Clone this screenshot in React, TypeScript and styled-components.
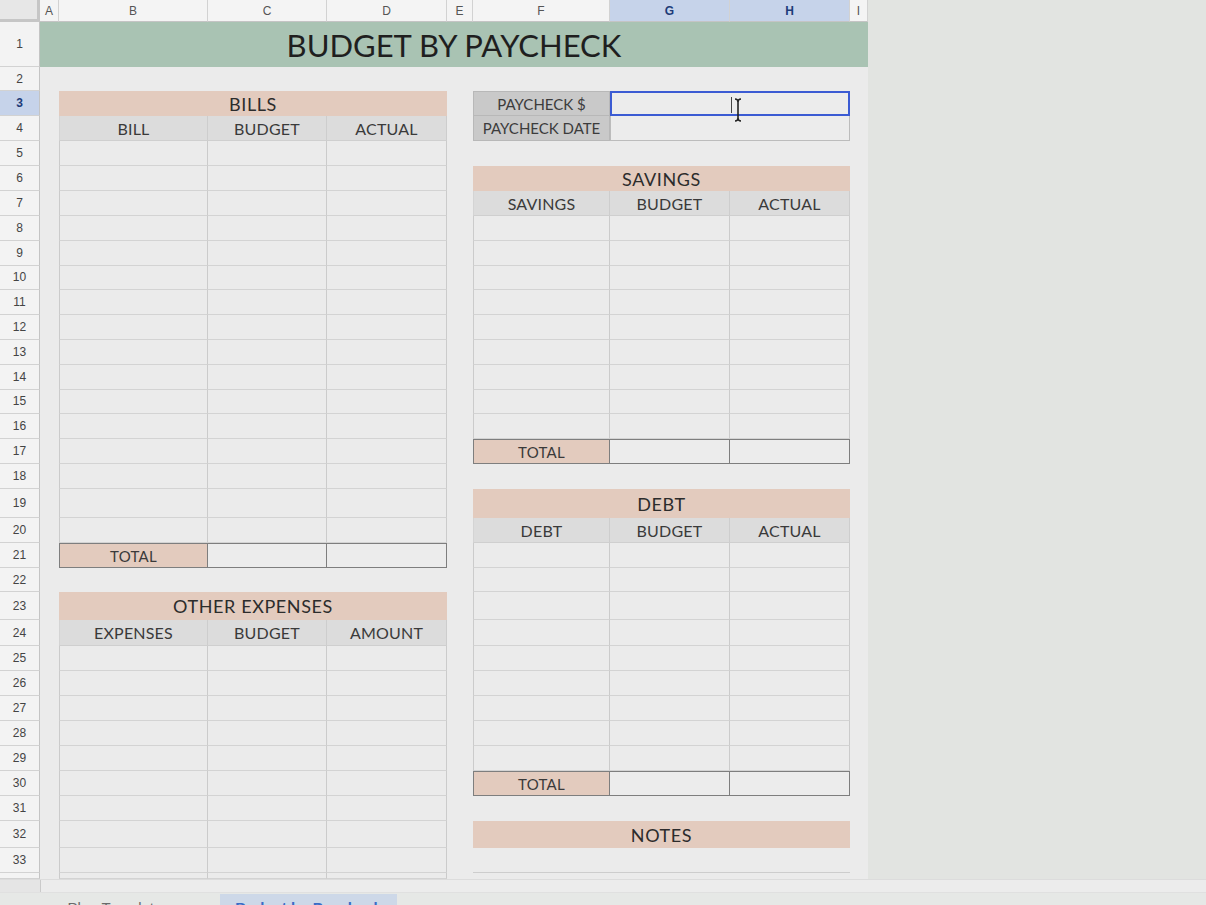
import React from 'react';
import styled, { createGlobalStyle, css } from 'styled-components';

const GlobalStyle = createGlobalStyle`
  html, body {
    margin: 0;
    padding: 0;
  }
  body {
    background: #e2e4e1;
    font-family: Lato, 'Liberation Sans', sans-serif;
  }
`;

// sheet geometry: row header + columns A..I
const colWidths = [40, 19, 149, 119, 120, 26, 137, 120, 120, 18];
const colLetters = ['A', 'B', 'C', 'D', 'E', 'F', 'G', 'H', 'I'];
const rowHeights = [
  45, 24, 25, 25, 25, 25, 25,
  24.8, 24.8, 24.8, 24.8, 24.8, 24.8, 24.8, 24.8, 24.8,
  25, 25, 29, 25, 25, 24, 28, 26,
  25, 25, 25, 25, 25,
  25, 25, 27, 25, 6,
];
const visibleRows = 33;
const selectedCols = [7, 8];
const selectedRow = 3;

const peach = '#e3cbbe';

type Pos = { $r: number; $c: number; $rs?: number; $cs?: number };

// $r = sheet row (1 based), $c = sheet column (A = 1)
const place = css<Pos>`
  grid-row: ${p => p.$r + 1} / span ${p => p.$rs ?? 1};
  grid-column: ${p => p.$c + 1} / span ${p => p.$cs ?? 1};
`;

const Page = styled.div`
  width: 1206px;
  height: 905px;
  display: flex;
  flex-direction: column;
  overflow: hidden;
  background: #e2e4e1;
`;

const Main = styled.div`
  display: flex;
  height: 879px;
`;

const Sheet = styled.div`
  display: grid;
  grid-template-columns: ${colWidths.map(w => `${w}px`).join(' ')};
  grid-template-rows: 22px ${rowHeights.map(h => `${h}px`).join(' ')};
  width: 868px;
  flex-shrink: 0;
  background: #ebebeb;
  overflow: hidden;
  box-shadow: 1px 0 2px rgba(0, 0, 0, 0.06);
`;

const Corner = styled.div`
  grid-row: 1;
  grid-column: 1;
  box-sizing: border-box;
  background: #e7e7e7;
  border-right: 3px solid #c6c6c6;
  border-bottom: 3px solid #c6c6c6;
`;

const ColHead = styled.div<{ $c: number; $sel: boolean }>`
  grid-row: 1;
  grid-column: ${p => p.$c + 1};
  box-sizing: border-box;
  display: flex;
  align-items: center;
  justify-content: center;
  background: ${p => (p.$sel ? '#c6d3ea' : '#f4f4f4')};
  border-right: 1px solid #d2d2d2;
  border-bottom: 1px solid #c4c4c4;
  font-family: 'Liberation Sans', Arial, sans-serif;
  font-size: 12px;
  font-weight: ${p => (p.$sel ? 700 : 400)};
  color: ${p => (p.$sel ? '#1d3b78' : '#555')};
`;

const RowHead = styled.div<{ $r: number; $sel: boolean }>`
  grid-row: ${p => p.$r + 1};
  grid-column: 1;
  box-sizing: border-box;
  display: flex;
  align-items: center;
  justify-content: center;
  overflow: hidden;
  background: ${p => (p.$sel ? '#c6d3ea' : '#f3f3f3')};
  border-right: 1px solid #c4c4c4;
  border-bottom: 1px solid #d2d2d2;
  font-family: 'Liberation Sans', Arial, sans-serif;
  font-size: 12px;
  font-weight: ${p => (p.$sel ? 700 : 400)};
  color: ${p => (p.$sel ? '#1d3b78' : '#444')};
`;

const Banner = styled.div<Pos>`
  ${place};
  display: flex;
  align-items: center;
  justify-content: center;
  background: #a9c3b3;
  font-size: 31px;
  font-weight: 400;
  color: #1f1f1f;
`;

const cellText = css`
  box-sizing: border-box;
  display: flex;
  align-items: center;
  justify-content: center;
  overflow: hidden;
  white-space: nowrap;
  color: #3a3a3a;
`;

const SectionTitle = styled.div<Pos>`
  ${place};
  ${cellText};
  background: ${peach};
  font-size: 18px;
  letter-spacing: 0.6px;
  color: #2c2c2c;
`;

const SubHead = styled.div<Pos & { $first: boolean }>`
  ${place};
  ${cellText};
  background: #dcdcdc;
  border-right: 1px solid #cdcdcd;
  border-bottom: 1px solid #cfcfcf;
  ${p => p.$first && 'border-left: 1px solid #d4d4d4;'}
  font-size: 16px;
  letter-spacing: 0.2px;
`;

const DataCell = styled.div<Pos & { $first: boolean }>`
  ${place};
  box-sizing: border-box;
  background: #ebebeb;
  border-right: 1px solid #cbcbcb;
  border-bottom: 1px solid #d3d3d3;
  ${p => p.$first && 'border-left: 1px solid #cbcbcb;'}
`;

const TotalLabel = styled.div<Pos>`
  ${place};
  ${cellText};
  background: ${peach};
  border: 1px solid #7e7e7e;
  font-size: 15px;
  letter-spacing: 0.3px;
`;

const TotalCell = styled.div<Pos>`
  ${place};
  box-sizing: border-box;
  background: #ececec;
  border-top: 1px solid #7e7e7e;
  border-right: 1px solid #7e7e7e;
  border-bottom: 1px solid #7e7e7e;
`;

const PayLabel = styled.div<Pos>`
  ${place};
  ${cellText};
  background: #c9c9c9;
  border: 1px solid #b8b8b8;
  border-top-width: ${p => (p.$r === 3 ? 1 : 0)}px;
  font-size: 15px;
  color: #3c3c3c;
`;

const PayValue = styled.div<Pos & { $sel?: boolean }>`
  ${place};
  position: relative;
  box-sizing: border-box;
  background: #ececec;
  border: 1px solid #bcbcbc;
  border-top-width: ${p => (p.$r === 3 ? 1 : 0)}px;
  ${p =>
    p.$sel &&
    css`
      border: 2px solid #3b5bd3;
      z-index: 2;
    `}
`;

const Caret = styled.div`
  position: absolute;
  left: 119px;
  top: 4px;
  width: 1px;
  height: 16px;
  background: #444;
`;

const Pointer = styled.svg`
  position: absolute;
  left: 122px;
  top: 5px;
  overflow: visible;
`;

const NotesLine = styled.div<Pos>`
  ${place};
  border-bottom: 1px solid #cdcdcd;
`;

const Side = styled.div`
  flex: 1;
  background: #e2e4e1;
`;

const ScrollBand = styled.div`
  display: flex;
  height: 12px;
  background: #ececec;
  border-top: 1px solid #dcdcdc;
  border-bottom: 1px solid #e0e0e0;
`;

const BandHead = styled.div`
  width: 40px;
  background: #e5e5e5;
  border-right: 1px solid #cacaca;
`;

const TabBar = styled.div`
  flex: 1;
  display: flex;
  align-items: flex-start;
  padding-left: 30px;
  padding-top: 1px;
  background: #e6e8e6;
  overflow: hidden;
`;

const Tab = styled.div<{ $active?: boolean }>`
  box-sizing: border-box;
  height: 30px;
  padding: 5px 12px 0;
  margin-right: ${p => (p.$active ? 0 : 20)}px;
  width: ${p => (p.$active ? '177px' : '170px')};
  text-align: center;
  background: ${p => (p.$active ? '#cdd8e8' : 'transparent')};
  font-family: 'Liberation Sans', Arial, sans-serif;
  font-size: 15px;
  white-space: nowrap;
  color: ${p => (p.$active ? '#3a6cc6' : '#6a6a6a')};
  font-weight: ${p => (p.$active ? 700 : 400)};
`;

type LedgerProps = {
  row: number;
  col: number;
  title: string;
  heads: string[];
  rows: number;
  total?: boolean;
};

const Ledger = ({ row, col, title, heads, rows, total }: LedgerProps) => {
  const totalRow = row + 2 + rows;
  return (
    <>
      <SectionTitle $r={row} $c={col} $cs={3}>
        {title}
      </SectionTitle>
      {heads.map((h, i) => (
        <SubHead key={h} $r={row + 1} $c={col + i} $first={i === 0}>
          {h}
        </SubHead>
      ))}
      {Array.from({ length: rows }).flatMap((_, j) =>
        [0, 1, 2].map(i => (
          <DataCell key={`${j}-${i}`} $r={row + 2 + j} $c={col + i} $first={i === 0} />
        )),
      )}
      {total && (
        <>
          <TotalLabel $r={totalRow} $c={col}>
            TOTAL
          </TotalLabel>
          <TotalCell $r={totalRow} $c={col + 1} />
          <TotalCell $r={totalRow} $c={col + 2} />
        </>
      )}
    </>
  );
};

export default function App() {
  return (
    <Page>
      <GlobalStyle />
      <Main>
        <Sheet>
          <Corner />
          {colLetters.map((l, i) => (
            <ColHead key={l} $c={i + 1} $sel={selectedCols.includes(i + 1)}>
              {l}
            </ColHead>
          ))}
          {rowHeights.map((_, i) => (
            <RowHead key={i} $r={i + 1} $sel={i + 1 === selectedRow}>
              {i < visibleRows ? i + 1 : ''}
            </RowHead>
          ))}

          <Banner $r={1} $c={1} $cs={9}>
            BUDGET BY PAYCHECK
          </Banner>

          <Ledger row={3} col={2} title="BILLS" heads={['BILL', 'BUDGET', 'ACTUAL']} rows={16} total />
          <Ledger
            row={23}
            col={2}
            title="OTHER EXPENSES"
            heads={['EXPENSES', 'BUDGET', 'AMOUNT']}
            rows={10}
          />

          <PayLabel $r={3} $c={6}>
            PAYCHECK $
          </PayLabel>
          <PayValue $r={3} $c={7} $cs={2} $sel>
            <Caret />
            <Pointer width="8" height="24" viewBox="0 0 8 24">
              <path
                d="M1 1 Q4 1 4 4 Q4 1 7 1 M4 4 V20 M1 23 Q4 23 4 20 Q4 23 7 23"
                fill="none"
                stroke="#222"
                strokeWidth="1.6"
              />
            </Pointer>
          </PayValue>
          <PayLabel $r={4} $c={6}>
            PAYCHECK DATE
          </PayLabel>
          <PayValue $r={4} $c={7} $cs={2} />

          <Ledger row={6} col={6} title="SAVINGS" heads={['SAVINGS', 'BUDGET', 'ACTUAL']} rows={9} total />
          <Ledger row={19} col={6} title="DEBT" heads={['DEBT', 'BUDGET', 'ACTUAL']} rows={9} total />

          <SectionTitle $r={32} $c={6} $cs={3}>
            NOTES
          </SectionTitle>
          <NotesLine $r={33} $c={6} $cs={3} />
        </Sheet>
        <Side />
      </Main>
      <ScrollBand>
        <BandHead />
      </ScrollBand>
      <TabBar>
        <Tab>Plan Template</Tab>
        <Tab $active>Budget by Paycheck</Tab>
      </TabBar>
    </Page>
  );
}
